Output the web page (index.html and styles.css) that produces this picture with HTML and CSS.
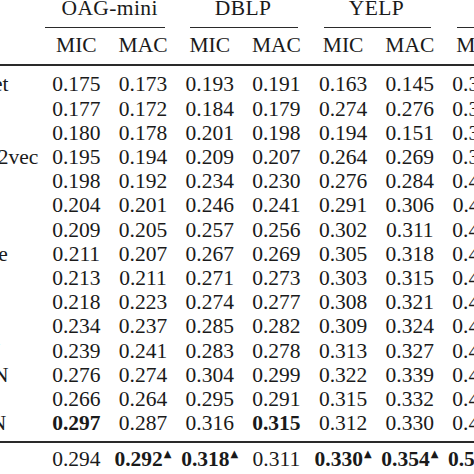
FILE: index.html
```html
<!DOCTYPE html>
<html>
<head>
    <meta charset="UTF-8">
    <meta name="viewport" content="width=device-width, initial-scale=1">
    <title>Node Classification Results</title>
    <link rel="stylesheet" href="styles.css">
</head>

<body>
    <div class="frame">
        <table class="results">
            <colgroup>
                <col class="col-name">
                <col class="col-num">
                <col class="col-num">
                <col class="col-num">
                <col class="col-num">
                <col class="col-num">
                <col class="col-num">
                <col class="col-num">
                <col class="col-num">
            </colgroup>
            <thead>
                <tr class="groups">
                    <th></th>
                    <th colspan="2"><div>OAG-mini</div><div class="cmid first"></div></th>
                    <th colspan="2"><div>DBLP</div><div class="cmid"></div></th>
                    <th colspan="2"><div>YELP</div><div class="cmid"></div></th>
                    <th colspan="2"><div>IMDB</div><div class="cmid"></div></th>
                </tr>
                <tr class="metrics">
                    <th></th>
                    <th>MIC</th><th>MAC</th>
                    <th>MIC</th><th>MAC</th>
                    <th>MIC</th><th>MAC</th>
                    <th>MIC</th><th>MAC</th>
                </tr>
            </thead>
            <tbody>
                <tr><td class="name">HeteroNet</td><td>0.175</td><td>0.173</td><td>0.193</td><td>0.191</td><td>0.163</td><td>0.145</td><td>0.352</td><td>0.341</td></tr>
                <tr><td class="name">LINE</td><td>0.177</td><td>0.172</td><td>0.184</td><td>0.179</td><td>0.274</td><td>0.276</td><td>0.361</td><td>0.350</td></tr>
                <tr><td class="name">HIN2vec</td><td>0.180</td><td>0.178</td><td>0.201</td><td>0.198</td><td>0.194</td><td>0.151</td><td>0.368</td><td>0.357</td></tr>
                <tr><td class="name">metapath2vec</td><td>0.195</td><td>0.194</td><td>0.209</td><td>0.207</td><td>0.264</td><td>0.269</td><td>0.389</td><td>0.376</td></tr>
                <tr><td class="name">HERec</td><td>0.198</td><td>0.192</td><td>0.234</td><td>0.230</td><td>0.276</td><td>0.284</td><td>0.402</td><td>0.391</td></tr>
                <tr><td class="name">GCN</td><td>0.204</td><td>0.201</td><td>0.246</td><td>0.241</td><td>0.291</td><td>0.306</td><td>0.411</td><td>0.398</td></tr>
                <tr><td class="name">GAT</td><td>0.209</td><td>0.205</td><td>0.257</td><td>0.256</td><td>0.302</td><td>0.311</td><td>0.418</td><td>0.405</td></tr>
                <tr><td class="name">GAT-Base</td><td>0.211</td><td>0.207</td><td>0.267</td><td>0.269</td><td>0.305</td><td>0.318</td><td>0.425</td><td>0.412</td></tr>
                <tr><td class="name">HGT</td><td>0.213</td><td>0.211</td><td>0.271</td><td>0.273</td><td>0.303</td><td>0.315</td><td>0.431</td><td>0.417</td></tr>
                <tr><td class="name">HAN</td><td>0.218</td><td>0.223</td><td>0.274</td><td>0.277</td><td>0.308</td><td>0.321</td><td>0.437</td><td>0.423</td></tr>
                <tr><td class="name">RGCN</td><td>0.234</td><td>0.237</td><td>0.285</td><td>0.282</td><td>0.309</td><td>0.324</td><td>0.442</td><td>0.429</td></tr>
                <tr><td class="name">MAGNN</td><td>0.239</td><td>0.241</td><td>0.283</td><td>0.278</td><td>0.313</td><td>0.327</td><td>0.446</td><td>0.433</td></tr>
                <tr><td class="name">HetSANN</td><td>0.276</td><td>0.274</td><td>0.304</td><td>0.299</td><td>0.322</td><td>0.339</td><td>0.458</td><td>0.444</td></tr>
                <tr><td class="name">GTN</td><td>0.266</td><td>0.264</td><td>0.295</td><td>0.291</td><td>0.315</td><td>0.332</td><td>0.453</td><td>0.440</td></tr>
                <tr><td class="name">HeteGNN</td><td><b>0.297</b></td><td>0.287</td><td>0.316</td><td><b>0.315</b></td><td>0.312</td><td>0.330</td><td>0.461</td><td>0.447</td></tr>
            </tbody>
            <tfoot>
                <tr>
                    <td class="name">Ours</td>
                    <td>0.294</td>
                    <td><b>0.292</b><span class="up">▲</span></td>
                    <td><b>0.318</b><span class="up">▲</span></td>
                    <td>0.311</td>
                    <td><b>0.330</b><span class="up">▲</span></td>
                    <td><b>0.354</b><span class="up">▲</span></td>
                    <td><b>0.512</b><span class="up">▲</span></td>
                    <td><b>0.498</b><span class="up">▲</span></td>
                </tr>
            </tfoot>
        </table>
    </div>
</body>
</html>
```

FILE: styles.css
```css
body {
    margin: 0;
    background: #fff;
    color: #1a1a1a;
    font-family: "Liberation Serif", "Times New Roman", serif;
}

.frame {
    width: 474px;
    height: 474px;
    overflow: hidden;
}

.results {
    margin: -3.8px 0 0 -81px;
    width: 657.6px;
    table-layout: fixed;
    border-collapse: separate;
    border-spacing: 0;
    font-size: 21.5px;
    line-height: 24.2px;
}

.col-name {
    width: 124px;
}

.col-num {
    width: 66.7px;
}

th,
td {
    padding: 0;
    text-align: center;
    font-weight: normal;
    white-space: nowrap;
}

td.name {
    text-align: left;
}

.groups th {
    letter-spacing: 0.4px;
}

.cmid {
    height: 1px;
    margin: 7px 12px 0 14px;
    background: #2a2a2a;
}

.cmid.first {
    margin-left: 2px;
    margin-right: 11px;
}

.metrics th {
    padding: 4.3px 0 7px;
    border-bottom: 2px solid #2a2a2a;
}

tbody tr:first-child td {
    padding-top: 6.5px;
}

tbody tr:last-child td {
    padding-bottom: 5.5px;
}

tfoot td {
    padding-top: 4.5px;
    border-top: 2px solid #2a2a2a;
}

b {
    font-weight: bold;
}

.up {
    font-family: "DejaVu Sans", sans-serif;
    font-size: 10px;
    line-height: 0;
    vertical-align: 9px;
    margin-left: 1px;
}
```
